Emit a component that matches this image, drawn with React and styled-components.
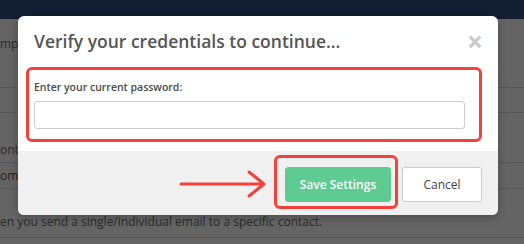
import React from 'react'
import styled, { createGlobalStyle } from 'styled-components'

const Global = createGlobalStyle`
  html, body {
    margin: 0;
    padding: 0;
  }
  body {
    width: 524px;
    height: 244px;
    overflow: hidden;
    font-family: "Open Sans", "DejaVu Sans", sans-serif;
  }
`

const Page = styled.div`
  position: relative;
  width: 524px;
  height: 244px;
  background: #646464;
  overflow: hidden;
`

const TopBar = styled.div`
  height: 19px;
  background: #131e33;
`

const Row = styled.div`
  height: ${p => p.h}px;
  border-bottom: 1px solid #555;
  display: flex;
  align-items: ${p => p.align || 'center'};
  padding-bottom: ${p => p.pb || 0}px;
  box-sizing: border-box;
  font-size: 12px;
  color: ${p => p.color || '#2a2a2a'};
  white-space: nowrap;
`

const Clip = styled.span`
  display: block;
  width: 18px;
  overflow: hidden;
`

const Modal = styled.div`
  position: absolute;
  left: 18px;
  top: 16px;
  width: 480px;
  height: 199px;
  background: #fff;
  border-radius: 6px;
  overflow: hidden;
  display: flex;
  flex-direction: column;
  box-shadow: 0 2px 8px rgba(0, 0, 0, 0.25);
`

const Header = styled.div`
  height: 51px;
  display: flex;
  align-items: center;
  justify-content: space-between;
  padding: 0 16px 2px 16px;
  box-sizing: border-box;
`

const Title = styled.h3`
  margin: 0;
  font-size: 17.5px;
  font-weight: 600;
  color: #555;
`

const Close = styled.span`
  font-size: 28px;
  font-weight: 700;
  color: #c9c9c9;
  line-height: 1;
  margin-right: -1px;
`

const Body = styled.div`
  padding: 0 16px 9px 8px;
`

const Highlight = styled.div`
  border: 3px solid #f4423b;
  border-radius: 6px;
  padding: 10px 14px 10px 5px;
`

const Label = styled.label`
  display: block;
  font-size: 10.5px;
  font-weight: 600;
  color: #4a4a4a;
  margin-bottom: 7px;
`

const Input = styled.input`
  display: block;
  box-sizing: border-box;
  width: 100%;
  height: 28px;
  border: 1px solid #ccc;
  border-radius: 3px;
  outline: none;
`

const Footer = styled.div`
  flex: 1;
  background: #f0f0f0;
  display: flex;
  align-items: center;
  justify-content: flex-end;
  padding: 0 16px 0 0;
`

const Arrow = styled.svg`
  margin-right: 7px;
  margin-top: 2px;
`

const ButtonHighlight = styled.div`
  border: 3px solid #f4423b;
  border-radius: 6px;
  padding: 9px 4px 4px 8px;
  margin-right: 4px;
  margin-top: -2px;
`

const Button = styled.button`
  box-sizing: border-box;
  height: 35px;
  width: ${p => p.w}px;
  margin-top: ${p => p.mt || 0}px;
  border-radius: 3px;
  font-family: inherit;
  font-size: 12px;
  font-weight: ${p => (p.primary ? 600 : 400)};
  color: ${p => (p.primary ? '#fff' : '#444')};
  background: ${p => (p.primary ? '#5ecb92' : '#fff')};
  border: 1px solid ${p => (p.primary ? '#5ecb92' : '#ccc')};
  display: block;
`

const App = () => {
  return (
    <Page>
      <Global />
      <TopBar />
      <Row h={69} pb={20}><Clip>mpaign</Clip></Row>
      <Row h={25} />
      <Row h={50} align="flex-end" pb={4}><Clip>ontact</Clip></Row>
      <Row h={26} color="#2e1a1a"><Clip>om</Clip></Row>
      <Row h={49} align="flex-end" pb={7}>
        en you send a single/individual email to a specific contact.
      </Row>
      <Modal>
        <Header>
          <Title>Verify your credentials to continue...</Title>
          <Close>×</Close>
        </Header>
        <Body>
          <Highlight>
            <Label>Enter your current password:</Label>
            <Input type="password" />
          </Highlight>
        </Body>
        <Footer>
          <Arrow width="88" height="30" viewBox="0 0 88 30">
            <path d="M2 15 H85 M70 3 L85 15 L70 27" fill="none" stroke="#f4423b" strokeWidth="3" strokeLinecap="round" strokeLinejoin="round" />
          </Arrow>
          <ButtonHighlight>
            <Button primary w={106}>Save Settings</Button>
          </ButtonHighlight>
          <Button w={80} mt={3}>Cancel</Button>
        </Footer>
      </Modal>
    </Page>
  )
}

export default App
